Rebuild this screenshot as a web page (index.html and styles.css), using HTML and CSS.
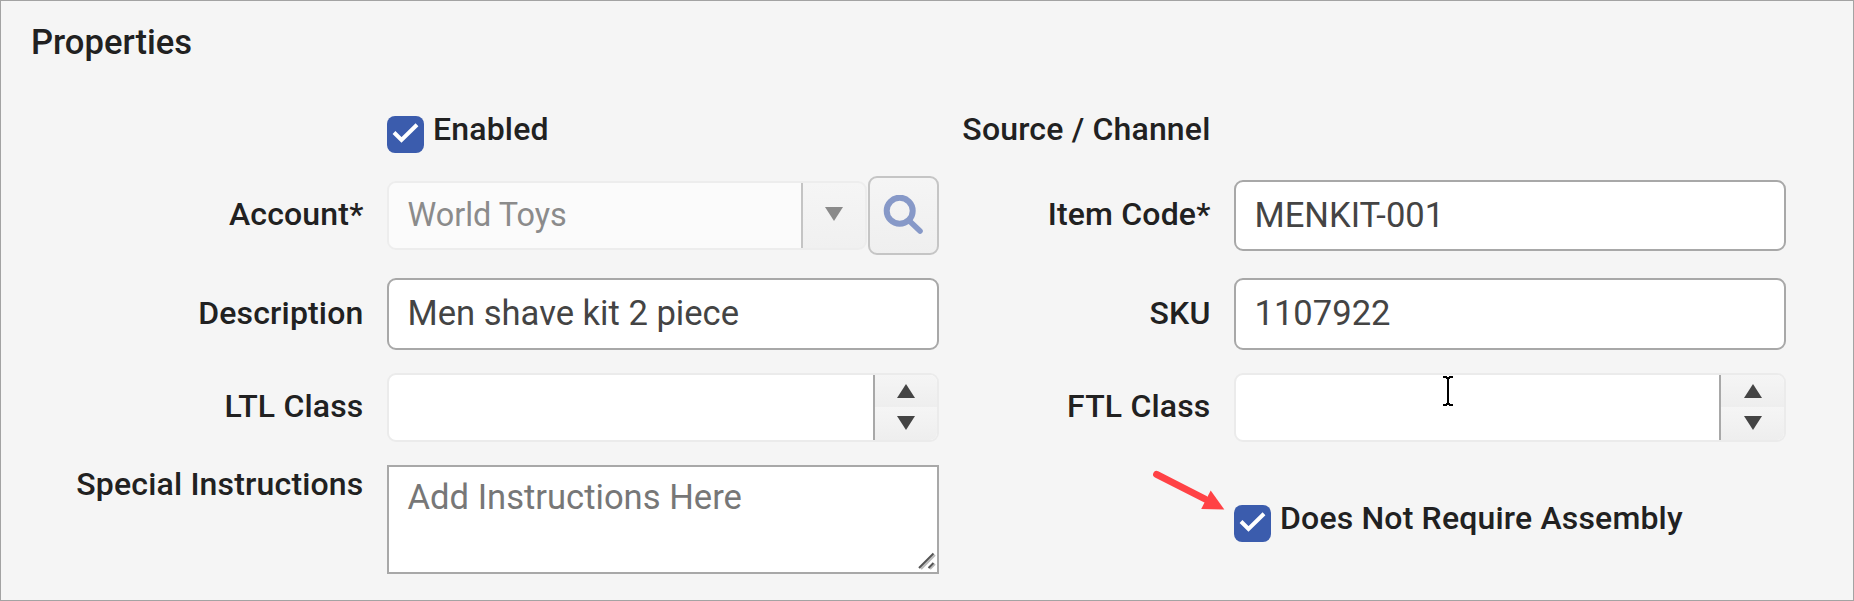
FILE: index.html
```html
<!DOCTYPE html>
<html lang="en">
<head>
<meta charset="utf-8">
<title>Properties</title>
<link rel="stylesheet" href="styles.css">
</head>
<body>
<main class="panel">
  <h1 class="title">Properties</h1>
  <div class="form">
    <div class="cell"></div>
    <div class="cell check-field enabled">
      <svg class="checkbox" viewBox="0 0 37 37"><rect width="37" height="37" rx="8"/><path d="M7 16.500 14.500 24 30 8.800"/></svg>
      <span class="check-label">Enabled</span>
    </div>
    <div class="label">Source / Channel</div>
    <div class="cell"></div>

    <div class="label account-label">Account*</div>
    <div class="cell account">
      <div class="combo">
        <div class="combo-text">World Toys</div>
        <div class="combo-arrow"><svg width="18" height="14" viewBox="0 0 18 14"><path d="M0 0h18L9 14z" fill="#8a8a8a"/></svg></div>
      </div>
      <div class="search"><svg width="40" height="40" viewBox="0 0 40 40" fill="none" stroke="#8799c8"><circle cx="16.700" cy="15.700" r="13" stroke-width="6"/><path d="M26.500 26 37 36" stroke-width="5.600" stroke-linecap="round"/></svg></div>
    </div>
    <div class="label account-label">Item Code*</div>
    <div class="cell"><div class="input code">MENKIT-001</div></div>

    <div class="label desc-label">Description</div>
    <div class="cell"><div class="input">Men shave kit 2 piece</div></div>
    <div class="label desc-label">SKU</div>
    <div class="cell"><div class="input">1107922</div></div>

    <div class="label class-label">LTL Class</div>
    <div class="cell">
      <div class="spinner"><div class="spin-text"></div><div class="spin-buttons">
        <div class="spin up"><svg width="18" height="14" viewBox="0 0 18 14"><path d="M0 14h18L9 0z" fill="#444"/></svg></div>
        <div class="spin down"><svg width="18" height="14" viewBox="0 0 18 14"><path d="M0 0h18L9 14z" fill="#444"/></svg></div>
      </div></div>
    </div>
    <div class="label class-label">FTL Class</div>
    <div class="cell">
      <div class="spinner ftl"><div class="spin-text"></div><div class="spin-buttons">
        <div class="spin up"><svg width="18" height="14" viewBox="0 0 18 14"><path d="M0 14h18L9 0z" fill="#444"/></svg></div>
        <div class="spin down"><svg width="18" height="14" viewBox="0 0 18 14"><path d="M0 0h18L9 14z" fill="#444"/></svg></div>
      </div></div>
    </div>

    <div class="label">Special Instructions</div>
    <div class="cell">
      <div class="textarea">Add Instructions Here
        <svg class="grip" width="18" height="18" viewBox="0 0 18 18" fill="none" stroke-width="2"><path d="M3 17 17 3M12 17l5-5" stroke="#bbb"/><path d="M1 16 15.500 1.500M10.500 16l5-5" stroke="#555"/></svg>
      </div>
    </div>
    <div class="cell"></div>
    <div class="cell check-field assembly">
      <svg class="checkbox" viewBox="0 0 37 37"><rect width="37" height="37" rx="8"/><path d="M7 16.500 14.500 24 30 8.800"/></svg>
      <span class="check-label">Does Not Require Assembly</span>
    </div>
  </div>
  <svg class="cursor" width="10" height="30" viewBox="0 0 10 30" shape-rendering="crispEdges"><path d="M0 0h4v1h2V0h4v2H7v1H6v24h1v1h3v2H6v-1H4v1H0v-2h3v-1h1V3H3V2H0z"/></svg>
  <svg class="arrow" width="75" height="44" viewBox="0 0 75 44"><path d="M6.600 6.300 55 31" stroke="#ff4245" stroke-width="7" stroke-linecap="round"/><path d="M74.300 41.500 60.700 22.500 51.200 41z" fill="#ff4245"/></svg>
</main>
</body>
</html>
```
FILE: styles.css
```css
* { box-sizing: border-box; }
body { margin: 0; font-family: Roboto, "Liberation Sans", sans-serif; }
svg { display: block; }
.panel {
  position: relative;
  height: 601px;
  border: 1px solid #a3a3a3;
  background: #f5f5f5;
  overflow: hidden;
}
.title {
  margin: 0;
  padding: 21px 0 0 30px;
  height: 109px;
  font-size: 34.6px;
  line-height: 40px;
  font-weight: 500;
  color: #212121;
}
.form {
  display: grid;
  grid-template-columns: 386px 552px 295px 552px;
  grid-template-rows: 66px 102px 95px 92px 110px;
}
.label {
  padding-right: 23.5px;
  font-size: 32px;
  line-height: 38px;
  font-weight: 500;
  letter-spacing: 0.17px;
  text-align: right;
  white-space: nowrap;
  color: #212121;
}
.account-label { padding-top: 19px; }
.desc-label { padding-top: 16px; }
.class-label { padding-top: 14px; }
.check-field { display: flex; align-items: flex-start; gap: 9px; }
.checkbox { width: 37px; height: 37px; margin-top: 6px; flex: none; }
.checkbox rect { fill: #3b5cad; }
.checkbox path { fill: none; stroke: #fff; stroke-width: 4; }
.check-label {
  font-size: 32px;
  line-height: 38px;
  font-weight: 500;
  letter-spacing: 0.17px;
  color: #212121;
  white-space: nowrap;
}
.assembly { padding-top: 34px; }
.input, .textarea {
  height: 72px;
  border: 2px solid #a8a8a8;
  border-radius: 9px;
  background: #fff;
  padding: 10.5px 18.5px 0;
  font-size: 34.6px;
  line-height: 44px;
  color: #444;
  white-space: nowrap;
}
.code { height: 71px; margin-top: 4px; }
.textarea {
  position: relative;
  height: 109px;
  border-radius: 0;
  padding-top: 7.500px;
  color: #777;
}
.grip { position: absolute; right: 1px; bottom: 2px; }
.account { display: flex; gap: 1px; align-items: flex-start; }
.combo {
  display: flex;
  width: 480px;
  height: 69px;
  margin-top: 5px;
  border: 2px solid #ededed;
  border-radius: 9px;
  overflow: hidden;
  background: linear-gradient(#f5f5f5, #f0f0f0);
}
.combo-text {
  width: 414px;
  border-right: 2px solid #c4c4c4;
  background: #fbfbfb;
  padding: 11.5px 0 0 18.5px;
  font-size: 32.4px;
  line-height: 40px;
  color: #8b8b8b;
}
.combo-arrow { flex: 1; padding: 24px 0 0 22px; }
.search {
  width: 71px;
  height: 79px;
  padding: 17px 0 0 13px;
  border: 2px solid #c5c5c5;
  border-radius: 9px;
  background: linear-gradient(#f5f5f5, #efefef);
}
.spinner {
  display: flex;
  height: 69px;
  border: 2px solid #ebebeb;
  border-radius: 9px;
  overflow: hidden;
  background: #fff;
}
.spin-text { flex: 1; border-right: 2px solid #a8a8a8; }
.spin-buttons { width: 62px; }
.ftl .spin-buttons { width: 63px; }
.spin { padding-left: 22px; background: linear-gradient(#f5f5f5, #eee); }
.ftl .spin { padding-left: 22.5px; }
.up { height: 32px; padding-top: 9px; }
.down { height: 33px; padding-top: 8.5px; }
.cursor { position: absolute; left: 1442px; top: 375px; }
.arrow { position: absolute; left: 1149px; top: 467px; }
```
